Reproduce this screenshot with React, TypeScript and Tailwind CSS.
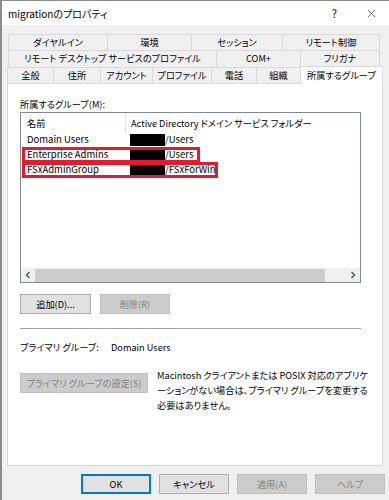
import { X } from "lucide-react";

const font = "[font-family:'Noto_Sans_CJK_JP',sans-serif] [font-feature-settings:'palt']";

const Tab = ({ w, text, last }: { w: number; text: string; last?: boolean }) => (
  <div
    className={`h-[16px] flex items-center justify-center border-t border-l border-[#d9d9d9] bg-[#f0f0f0] text-[9.2px] leading-[15px] text-black whitespace-nowrap ${last ? "border-r" : ""}`}
    style={{ width: w }}
  >
    {text}
  </div>
);

const Btn = ({ w, text, disabled, primary }: { w: number; text: string; disabled?: boolean; primary?: boolean }) => (
  <div
    className={`h-[20px] flex items-center justify-center text-[9.2px] leading-[14px] whitespace-nowrap ${
      disabled
        ? "bg-[#cccccc] border border-[#bfbfbf] text-[#838383]"
        : primary
        ? "bg-[#e1e1e1] border-2 border-[#0078d7] text-black"
        : "bg-[#e1e1e1] border border-[#adadad] text-black"
    }`}
    style={{ width: w }}
  >
    {text}
  </div>
);

const Row = ({ name, path }: { name: string; path: string }) => (
  <div className="h-[15px] flex items-center pb-[2px] text-[9.5px] leading-[13px]">
    <div className="w-[105px] pl-[6px]">{name}</div>
    <div className="flex items-center">
      <div className="w-[35px] h-[12px] bg-black ml-[4px]" />
      <span>{path}</span>
    </div>
  </div>
);

export default function App() {
  return (
    <div className={`w-[389px] h-[500px] overflow-hidden bg-[#f0f0f0] border-l-2 border-t border-[#8c8c8c] ${font}`}>
      {/* title bar */}
      <div className="h-[24px] bg-white flex items-center pl-[6px] pr-[11px]">
        <span className="text-[10px] text-black">migrationのプロパティ</span>
        <span className="ml-auto text-[11px] text-black mr-[28px]">?</span>
        <X size={13} strokeWidth={1} className="text-black" />
      </div>

      {/* tabs */}
      <div className="pt-[9px] pl-[5px]">
        <div className="flex ml-[1px]">
          <Tab w={99} text="ダイヤルイン" />
          <Tab w={84} text="環境" />
          <Tab w={91} text="セッション" />
          <Tab w={98} text="リモート制御" last />
        </div>
        <div className="flex ml-[1px]">
          <Tab w={208} text="リモート デスクトップ サービスのプロファイル" />
          <Tab w={84} text="COM+" />
          <Tab w={80} text="フリガナ" last />
        </div>
        <div className="flex items-end">
          <Tab w={46} text="全般" />
          <Tab w={47} text="住所" />
          <Tab w={52} text="アカウント" />
          <Tab w={59} text="プロファイル" />
          <Tab w={45} text="電話" />
          <Tab w={44} text="組織" />
          <div className="relative z-10 -mb-px w-[83px] h-[18px] bg-white border-t border-l border-r border-[#d9d9d9] flex items-start justify-center pt-[1px] text-[9.2px] leading-[14px] whitespace-nowrap">
            所属するグループ
          </div>
        </div>

        {/* panel */}
        <div className="w-[376px] h-[383px] bg-white border border-[#d9d9d9] pl-[12px] text-black">
          <div className="mt-[13px] h-[14px] leading-[14px] text-[9.2px]">所属するグループ(M):</div>

          <div className="relative mt-[1px] w-[341px] h-[171px] border border-[#828790] flex flex-col">
            <div className="h-[20px] flex text-[9.2px] leading-[15px]">
              <div className="w-[105px] pl-[6px] flex items-center border-r border-[#e5e5e5]">名前</div>
              <div className="flex items-center pl-[5px] whitespace-nowrap">Active Directory ドメイン サービス フォルダー</div>
            </div>
            <Row name="Domain Users" path="/Users" />
            <Row name="Enterprise Admins" path="/Users" />
            <Row name="FSxAdminGroup" path="/FSxForWin" />
            <div className="flex-1" />
            <div className="h-[14px] bg-[#f0f0f0] flex items-center">
              <div className="w-[14px] flex justify-center">
                <svg width="6" height="8" viewBox="0 0 6 8"><polyline points="4.5,1 1.5,4 4.5,7" fill="none" stroke="#606060" strokeWidth="1.6" /></svg>
              </div>
              <div className="w-[290px] h-[13px] bg-[#cdcdcd]" />
              <div className="flex-1 flex justify-end pr-[4px]">
                <svg width="6" height="8" viewBox="0 0 6 8"><polyline points="1.5,1 4.5,4 1.5,7" fill="none" stroke="#606060" strokeWidth="1.6" /></svg>
              </div>
            </div>
            {/* annotations */}
            <div className="absolute left-[1px] top-[34px] w-[178px] h-[16px] border-[3px] border-[#e8192c]" />
            <div className="absolute left-[1px] top-[49px] w-[196px] h-[16px] border-[3px] border-[#e8192c]" />
          </div>

          <div className="mt-[11px] flex gap-[9px]">
            <Btn w={71} text="追加(D)..." />
            <Btn w={70} text="削除(R)" disabled />
          </div>

          <div className="mt-[14px] w-[341px] h-px bg-[#a0a0a0]" />

          <div className="mt-[11px] h-[14px] flex items-center text-[9.2px] leading-[14px]">
            <span className="w-[91px]">プライマリ グループ:</span>
            <span>Domain Users</span>
          </div>

          <div className="mt-[14px] flex items-start">
            <div className="mt-[5px]">
              <Btn w={128} text="プライマリ グループの設定(S)" disabled />
            </div>
            <div className="ml-[9px] text-[9.2px] leading-[15px] whitespace-nowrap">
              Macintosh クライアントまたは POSIX 対応のアプリケ
              <br />
              ーションがない場合は、プライマリ グループを変更する
              <br />
              必要はありません。
            </div>
          </div>
        </div>
      </div>

      {/* footer buttons */}
      <div className="mt-[8px] flex gap-[8px] pl-[79px]">
        <Btn w={70} text="OK" primary />
        <Btn w={70} text="キャンセル" />
        <Btn w={70} text="適用(A)" disabled />
        <Btn w={70} text="ヘルプ" disabled />
      </div>
    </div>
  );
}
